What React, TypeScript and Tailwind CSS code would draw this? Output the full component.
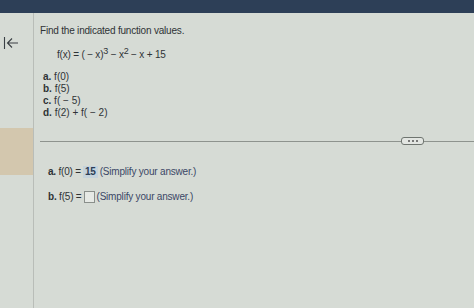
export default function App() {
  return (
    <div className="w-[474px] h-[308px] overflow-hidden bg-[#d6dbd5] text-[#2f3336] flex flex-col" style={{ fontFamily: '"Liberation Sans", Arial, sans-serif' }}>
      <div className="h-[13px] bg-[#2d3f57] shrink-0" />
      <div className="flex flex-1">
        {/* left rail */}
        <div className="w-[34px] shrink-0 border-r border-[#b9bdb8] flex flex-col">
          <div className="mt-[22px] h-[16px] flex items-center pl-[3px]">
            <svg width="16" height="14" viewBox="0 0 16 14" fill="none" stroke="#3a3f44" strokeWidth="1.1">
              <path d="M1.5 1v12" />
              <path d="M15 7H4.5M9 2.5L4.5 7 9 11.5" />
            </svg>
          </div>
          <div className="mt-[77px] h-[47px] bg-[#d3c7ae]" />
        </div>

        {/* content */}
        <div className="flex-1 flex flex-col">
          <div className="pl-[6px] pt-[12px] text-[10px] leading-[12px]">
            <div className="tracking-[-0.2px]">Find the indicated function values.</div>
            <div className="mt-[12px] pl-[17px] tracking-[-0.2px]">
              f(x) = ( − x)<span className="relative -top-[4px] text-[9px]">3</span> − x<span className="relative -top-[4px] text-[9px]">2</span> − x + 15
            </div>
            <div className="mt-[10px] pl-[3px] flex flex-col leading-[12px]">
              <div><span className="font-bold">a.</span> f(0)</div>
              <div><span className="font-bold">b.</span> f(5)</div>
              <div><span className="font-bold">c.</span> f( − 5)</div>
              <div><span className="font-bold">d.</span> f(2) + f( − 2)</div>
            </div>
          </div>

          <div className="mt-[18px] ml-[6px] flex items-center">
            <div className="flex-1 h-px bg-[#8e938e]" />
            <div className="w-[23px] h-[8px] border border-[#6f7570] rounded-[3px] bg-[#e3e6e2] flex items-center justify-center gap-[2px]">
              <span className="w-[2px] h-[2px] bg-[#555] rounded-full" />
              <span className="w-[2px] h-[2px] bg-[#555] rounded-full" />
              <span className="w-[2px] h-[2px] bg-[#555] rounded-full" />
            </div>
            <div className="w-[50px] h-px bg-[#8e938e]" />
          </div>

          <div className="pl-[14px] pt-[21px] text-[10px] leading-[12px] flex flex-col gap-[13px]">
            <div className="flex items-center gap-[2px] tracking-[-0.2px]">
              <span><span className="font-bold">a.</span> f(0) =</span>
              <span className="bg-[#c5d3dc] px-[2px] text-[#2c3e56] font-bold">15</span>
              <span className="text-[#3b4766]">(Simplify your answer.)</span>
            </div>
            <div className="flex items-center gap-[2px] tracking-[-0.2px]">
              <span><span className="font-bold">b.</span> f(5) =</span>
              <span className="w-[11px] h-[12px] border border-[#8a8f8b] bg-[#e6e9e5]" />
              <span className="text-[#3b4766]">(Simplify your answer.)</span>
            </div>
          </div>
        </div>
      </div>
    </div>
  )
}
